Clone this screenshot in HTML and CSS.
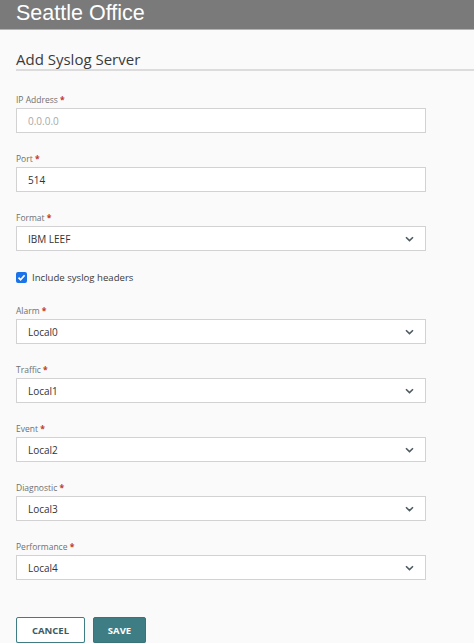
FILE: index.html
```html
<!DOCTYPE html>
<html>
<head>
<meta charset="utf-8">
<link rel="stylesheet" href="styles.css">
</head>
<body>
<header class="topbar">Seattle Office</header>
<main class="form">
  <h2 class="title">Add Syslog Server</h2>

  <div class="field">
    <label class="label">IP Address <span class="req">*</span></label>
    <div class="input"><span class="placeholder">0.0.0.0</span></div>
  </div>

  <div class="field">
    <label class="label">Port <span class="req">*</span></label>
    <div class="input"><span class="value">514</span></div>
  </div>

  <div class="field">
    <label class="label">Format <span class="req">*</span></label>
    <div class="input select"><span class="value">IBM LEEF</span><svg class="chev" width="9" height="6" viewBox="0 0 9 6"><path d="M1 1.2 L4.5 4.6 L8 1.2" fill="none" stroke="#4f5b62" stroke-width="1.6"/></svg></div>
  </div>

  <div class="check-row">
    <span class="checkbox"><svg width="11" height="11" viewBox="0 0 11 11"><rect x="0" y="0" width="11" height="11" rx="2" fill="#1a73e8"/><path d="M2.5 5.6 L4.6 7.7 L8.6 3.3" fill="none" stroke="#fff" stroke-width="1.7"/></svg></span>
    <span class="check-text">Include syslog headers</span>
  </div>

  <div class="field">
    <label class="label">Alarm <span class="req">*</span></label>
    <div class="input select"><span class="value">Local0</span><svg class="chev" width="9" height="6" viewBox="0 0 9 6"><path d="M1 1.2 L4.5 4.6 L8 1.2" fill="none" stroke="#4f5b62" stroke-width="1.6"/></svg></div>
  </div>

  <div class="field">
    <label class="label">Traffic <span class="req">*</span></label>
    <div class="input select"><span class="value">Local1</span><svg class="chev" width="9" height="6" viewBox="0 0 9 6"><path d="M1 1.2 L4.5 4.6 L8 1.2" fill="none" stroke="#4f5b62" stroke-width="1.6"/></svg></div>
  </div>

  <div class="field">
    <label class="label">Event <span class="req">*</span></label>
    <div class="input select"><span class="value">Local2</span><svg class="chev" width="9" height="6" viewBox="0 0 9 6"><path d="M1 1.2 L4.5 4.6 L8 1.2" fill="none" stroke="#4f5b62" stroke-width="1.6"/></svg></div>
  </div>

  <div class="field">
    <label class="label">Diagnostic <span class="req">*</span></label>
    <div class="input select"><span class="value">Local3</span><svg class="chev" width="9" height="6" viewBox="0 0 9 6"><path d="M1 1.2 L4.5 4.6 L8 1.2" fill="none" stroke="#4f5b62" stroke-width="1.6"/></svg></div>
  </div>

  <div class="field">
    <label class="label">Performance <span class="req">*</span></label>
    <div class="input select"><span class="value">Local4</span><svg class="chev" width="9" height="6" viewBox="0 0 9 6"><path d="M1 1.2 L4.5 4.6 L8 1.2" fill="none" stroke="#4f5b62" stroke-width="1.6"/></svg></div>
  </div>

  <div class="actions">
    <button class="btn btn-cancel">CANCEL</button>
    <button class="btn btn-save">SAVE</button>
  </div>
</main>
</body>
</html>
```

FILE: styles.css
```css
html, body {
  margin: 0;
  padding: 0;
  background: #fafafa;
  height: 100%;
  overflow: hidden;
}

body {
  font-family: "Open Sans", "Noto Sans", sans-serif;
  color: #333;
}

.topbar {
  height: 30px;
  box-sizing: border-box;
  background: #7a7a7a;
  border-bottom: 1px solid #b4b4b4;
  color: #ffffff;
  font-family: "Liberation Sans", Arial, sans-serif;
  font-size: 21.5px;
  line-height: 26px;
  padding-left: 16px;
}

.form {
  padding-left: 16px;
}

.title {
  margin: 19px 0 23px 0;
  font-size: 15px;
  font-weight: 400;
  line-height: 20px;
  color: #3a3a3a;
  border-bottom: 2px solid #dcdcdc;
}

.field {
  margin-bottom: 20px;
}

.label {
  display: block;
  font-size: 8.5px;
  line-height: 12px;
  margin-bottom: 2px;
  color: #707070;
}

.req {
  color: #c0392b;
  font-weight: 700;
}

.input {
  width: 410px;
  height: 25px;
  box-sizing: border-box;
  background: #ffffff;
  border: 1.5px solid #d2d2d2;
  display: flex;
  align-items: center;
  padding: 0 11px 0 11px;
  font-size: 10px;
}

.select {
  justify-content: space-between;
}

.placeholder {
  color: #a8a8a8;
}

.value {
  color: #333;
}

.chev {
  display: block;
  margin-top: 1px;
}

.check-row {
  display: flex;
  align-items: center;
  height: 12px;
  margin-bottom: 22px;
}

.checkbox {
  display: block;
  width: 11px;
  height: 11px;
  margin-right: 5px;
}

.checkbox svg {
  display: block;
}

.check-text {
  font-size: 9.6px;
  color: #3a3a3a;
}

.actions {
  display: flex;
  gap: 8px;
  padding-top: 17px;
}

.btn {
  height: 26px;
  box-sizing: border-box;
  font-family: "Open Sans", "Noto Sans", sans-serif;
  font-size: 9.5px;
  font-weight: 700;
  border-radius: 2px;
  padding: 0;
  cursor: pointer;
}

.btn-cancel {
  width: 69px;
  background: #ffffff;
  border: 1.5px solid #3f7d84;
  color: #3d5a63;
  box-shadow: 0 2px 0 #b9d3df;
}

.btn-save {
  width: 53px;
  background: #3f7d84;
  border: 1.5px solid #3a747a;
  color: #ffffff;
  box-shadow: 0 2px 0 #b9d3df;
}
```
